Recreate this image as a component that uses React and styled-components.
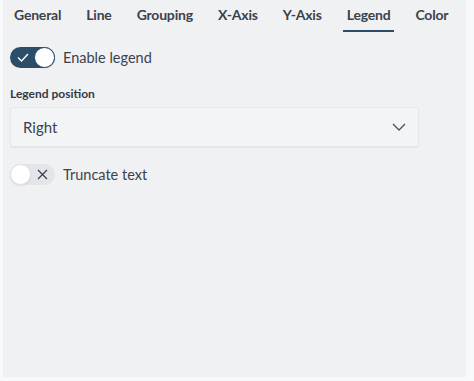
import React from "react";
import styled, { createGlobalStyle } from "styled-components";

const Global = createGlobalStyle`
  html, body { margin: 0; padding: 0; background: #f8f9fa; }
  body { font-family: "Lato", "Noto Sans", sans-serif; color: #343a44; }
`;

const Panel = styled.div`
  margin-left: 3px;
  width: 463px;
  height: 377px;
  background: #f0f1f3;
  box-sizing: border-box;
  display: flex;
  flex-direction: column;
`;

const Tabs = styled.div`
  display: flex;
  gap: 25px;
  padding: 0 0 0 11px;
  height: 32px;
  white-space: nowrap;
`;

const Tab = styled.div`
  position: relative;
  flex-shrink: 0;
  font-size: 14px;
  font-weight: 700;
  letter-spacing: -0.2px;
  color: #3b424d;
  line-height: 1;
  padding-top: 8px;
  box-sizing: border-box;
  height: 32px;
  &::after {
    content: "";
    position: absolute;
    left: -4px;
    right: -4px;
    bottom: 0;
    height: 2px;
    background: ${(p) => (p.$active ? "#2c4d68" : "transparent")};
  }
`;

const Body = styled.div`
  padding: 14px 0 0 7px;
  display: flex;
  flex-direction: column;
`;

const Row = styled.label`
  display: flex;
  align-items: center;
  gap: 8px;
  font-size: 14.5px;
  color: #3b424d;
  height: 22px;
`;

const Track = styled.span`
  position: relative;
  width: 45px;
  height: 21px;
  border-radius: 11px;
  background: ${(p) => (p.$on ? "#2b4d69" : "#e3e5e9")};
  display: inline-block;
  flex-shrink: 0;
`;

const Knob = styled.span`
  position: absolute;
  top: 0;
  ${(p) => (p.$on ? "right: 0;" : "left: 0;")}
  width: 21px;
  height: 21px;
  border-radius: 50%;
  background: #fff;
  box-sizing: border-box;
  border: 1px solid ${(p) => (p.$on ? "#2b4d69" : "#dfe1e5")};
  box-shadow: 0 1px 2px rgba(0, 0, 0, 0.08);
`;

const TrackIcon = styled.svg`
  position: absolute;
  top: 5px;
  ${(p) => (p.$on ? "left: 7px;" : "right: 7px;")}
`;

const Label = styled.div`
  font-size: 12px;
  font-weight: 700;
  color: #343a44;
  margin-top: 18px;
  margin-bottom: 6px;
`;

const Select = styled.div`
  width: 409px;
  height: 40px;
  box-sizing: border-box;
  background: #f3f4f6;
  border: 1px solid #e6e8eb;
  border-radius: 3px;
  box-shadow: 0 1px 1px rgba(0, 0, 0, 0.06);
  display: flex;
  align-items: center;
  justify-content: space-between;
  padding: 0 12px 0 12px;
  font-size: 15px;
  color: #3b424d;
`;

const Spacer = styled.div`
  height: 16px;
`;

function Toggle({ on }) {
  return (
    <Track $on={on}>
      {on ? (
        <TrackIcon $on width="12" height="11" viewBox="0 0 12 11">
          <path d="M1 5.5 L4.5 9 L11 2" fill="none" stroke="#fff" strokeWidth="1.4" />
        </TrackIcon>
      ) : (
        <TrackIcon width="11" height="11" viewBox="0 0 11 11">
          <path d="M1 1 L10 10 M10 1 L1 10" fill="none" stroke="#3b424d" strokeWidth="1.3" />
        </TrackIcon>
      )}
      <Knob $on={on} />
    </Track>
  );
}

export default function App() {
  const tabs = ["General", "Line", "Grouping", "X-Axis", "Y-Axis", "Legend", "Color"];
  return (
    <>
      <Global />
      <Panel>
        <Tabs>
          {tabs.map((t) => (
            <Tab key={t} $active={t === "Legend"}>
              {t}
            </Tab>
          ))}
        </Tabs>
        <Body>
          <Row>
            <Toggle on />
            Enable legend
          </Row>
          <Label>Legend position</Label>
          <Select>
            <span>Right</span>
            <svg width="14" height="8" viewBox="0 0 14 8">
              <path d="M1 1 L7 7 L13 1" fill="none" stroke="#4a515c" strokeWidth="1.3" />
            </svg>
          </Select>
          <Spacer />
          <Row>
            <Toggle on={false} />
            Truncate text
          </Row>
        </Body>
      </Panel>
    </>
  );
}
